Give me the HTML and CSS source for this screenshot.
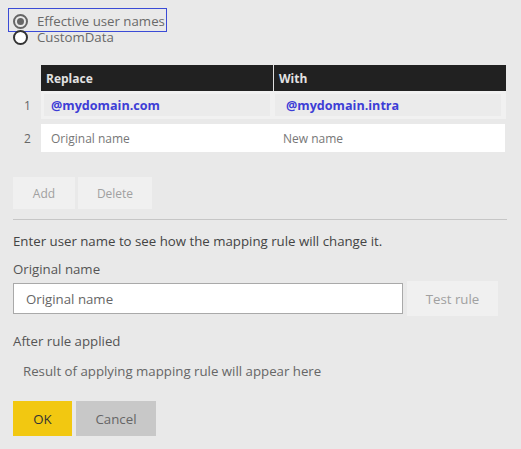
FILE: index.html
```html
<!DOCTYPE html>
<html>
<head>
<meta charset="utf-8">
<link rel="stylesheet" href="styles.css">
</head>
<body>
<div class="dlg">
  <div class="radios">
    <label class="radio focused"><span class="dot on"></span><span class="rlabel">Effective user names</span></label>
    <label class="radio"><span class="dot"></span><span class="rlabel">CustomData</span></label>
  </div>

  <div class="table">
    <div class="row head">
      <div class="num"></div>
      <div class="th">Replace</div>
      <div class="th th2">With</div>
    </div>
    <div class="row r1">
      <div class="num">1</div>
      <div class="cell c1"><span class="val">@mydomain.com</span></div>
      <div class="cell c2"><span class="val">@mydomain.intra</span></div>
    </div>
    <div class="row r2">
      <div class="num">2</div>
      <div class="cell2">Original name</div>
      <div class="cell2 n2">New name</div>
    </div>
  </div>

  <div class="btns">
    <button class="btn add">Add</button>
    <button class="btn del">Delete</button>
  </div>

  <div class="sep"></div>

  <p class="hint">Enter user name to see how the mapping rule will change it.</p>
  <p class="label">Original name</p>
  <div class="testrow">
    <div class="input">Original name</div>
    <button class="btn test">Test rule</button>
  </div>
  <p class="label after">After rule applied</p>
  <p class="result">Result of applying mapping rule will appear here</p>

  <div class="footer">
    <button class="fbtn ok">OK</button>
    <button class="fbtn cancel">Cancel</button>
  </div>
</div>
</body>
</html>
```

FILE: styles.css
```css
html, body {
  margin: 0;
  padding: 0;
  background: #e9e9e9;
}
body {
  font-family: "Open Sans", "Noto Sans", sans-serif;
  font-size: 13.25px;
  color: #444;
}
.dlg {
  width: 521px;
  height: 449px;
  box-sizing: border-box;
  padding: 13px 0 0 13px;
  overflow: hidden;
}
.radios {
  display: flex;
  flex-direction: column;
}
.radio {
  display: flex;
  align-items: center;
  height: 16px;
  line-height: 16px;
  color: #6a6a6a;
  font-size: 13.25px;
  position: relative;
  width: max-content;
}
.focused::after {
  content: "";
  position: absolute;
  left: -5px;
  top: -5px;
  width: 157px;
  height: 22px;
  border: 1px solid #3b4bd6;
}
.dot {
  width: 11px;
  height: 11px;
  border: 2px solid #333;
  border-radius: 50%;
  background: #fff;
  box-sizing: content-box;
  margin-right: 9px;
  position: relative;
  flex: none;
}
.dot.on {
  border-color: #666;
  background: #e9e9e9;
}
.dot.on::after {
  content: "";
  position: absolute;
  left: 2px;
  top: 2px;
  width: 7px;
  height: 7px;
  border-radius: 50%;
  background: #666;
}
.table {
  margin-top: 20px;
  width: 493px;
}
.row {
  display: flex;
}
.head {
  height: 26px;
}
.head .th {
  background: #212121;
  color: #e2e2e2;
  font-weight: bold;
  font-size: 12px;
  display: flex;
  align-items: center;
  padding-left: 5px;
  box-sizing: border-box;
  width: 232px;
}
.head .th2 {
  border-left: 1px solid #e0e0e0;
  width: 233px;
}
.num {
  width: 28px;
  flex: none;
  display: flex;
  align-items: center;
  justify-content: center;
  color: #666;
  font-size: 12px;
  padding-left: 1px;
  box-sizing: border-box;
}
.r1 {
  height: 28px;
}
.cell {
  background: #ebebeb;
  display: flex;
  align-items: center;
  box-sizing: border-box;
  height: 28px;
  border: 3px solid #f1f1f1;
}
.c1 {
  width: 232px;
  padding-left: 7px;
}
.c2 {
  width: 233px;
  border-left-width: 2px;
  border-right-width: 5px;
  padding-left: 11px;
}
.val {
  color: #3d3dd6;
  font-weight: bold;
  font-size: 12.6px;
}
.r2 {
  height: 28px;
  margin-top: 5px;
}
.cell2 {
  background: #fff;
  width: 232px;
  display: flex;
  align-items: center;
  padding-left: 10px;
  box-sizing: border-box;
  color: #777;
  font-size: 12px;
}
.cell2.n2 {
  width: 232px;
  padding-left: 10px;
}
.btns {
  display: flex;
  gap: 3px;
  margin-top: 25px;
}
.btn {
  font-family: inherit;
  border: none;
  background: #f0f0f0;
  color: #a0a0a0;
  font-size: 12px;
  height: 32px;
  padding: 0;
}
.add { width: 62px; }
.del { width: 74px; }
.sep {
  margin-top: 10px;
  width: 494px;
  height: 1px;
  background: #c6c6c6;
}
p {
  margin: 0;
  line-height: 20px;
}
.hint {
  margin-top: 11px;
  color: #444;
}
.label {
  margin-top: 8px;
  color: #555;
}
.testrow {
  display: flex;
  align-items: center;
  gap: 4px;
  margin-top: 2px;
}
.input {
  width: 390px;
  height: 31px;
  box-sizing: border-box;
  background: #fff;
  border: 1px solid #a9a9a9;
  display: flex;
  align-items: center;
  padding-left: 12px;
  color: #666;
}
.btn.test {
  width: 91px;
  height: 35px;
  font-size: 13.25px;
}
.label.after {
  margin-top: 15px;
}
.result {
  margin-top: 10px;
  padding-left: 10px;
  color: #666;
}
.footer {
  display: flex;
  gap: 4px;
  margin-top: 20px;
}
.fbtn {
  font-family: inherit;
  font-size: 13.25px;
  border: none;
  height: 35px;
  padding: 0;
}
.ok {
  width: 59px;
  background: #f2c811;
  color: #333;
}
.cancel {
  width: 80px;
  background: #c8c8c8;
  color: #666;
}
```
